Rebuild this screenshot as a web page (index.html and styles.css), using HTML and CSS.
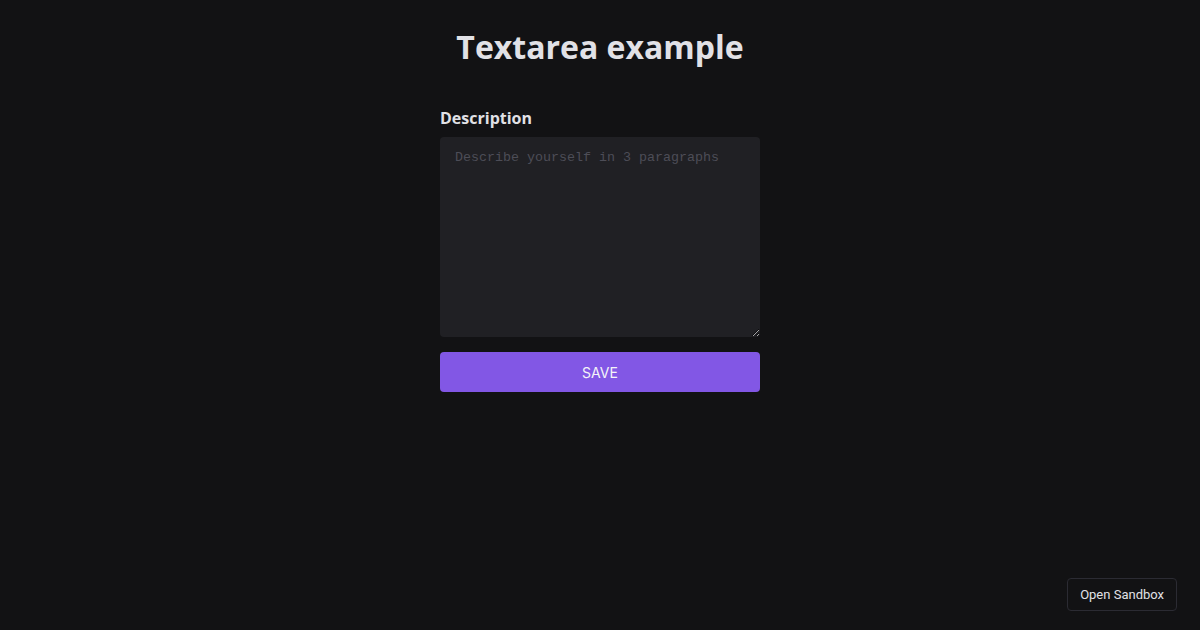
FILE: index.html
```html
<!DOCTYPE html>
<html lang="en">
<head>
<meta charset="UTF-8" />
<title>Textarea example</title>
<meta name="viewport" content="width=device-width,initial-scale=1" />
<link rel="stylesheet" href="styles.css">
</head>
<body>
<div id="app">
  <h1 class="title">Textarea example</h1>
  <form class="form" onsubmit="return false">
    <label class="label" for="description">Description</label>
    <textarea id="description" class="textarea" placeholder="Describe yourself in 3 paragraphs"></textarea>
    <button type="submit" class="save-btn">SAVE</button>
  </form>
</div>
<button class="sandbox-btn">Open Sandbox</button>
</body>
</html>
```

FILE: styles.css
```css
html, body {
  height: 100%;
  margin: 0;
  padding: 0;
  background: #121214;
  color: #e1e1e6;
  font-family: 'Open Sans', Arial, sans-serif;
}
#app {
  display: flex;
  flex-direction: column;
  align-items: center;
}
.title {
  font-size: 32px;
  font-weight: 700;
  margin: 25px 0 0 0;
  line-height: 44px;
  color: #e1e1e6;
}
.form {
  width: 320px;
  display: flex;
  flex-direction: column;
  margin-top: 37px;
}
.label {
  font-size: 16px;
  font-weight: 700;
  line-height: 24px;
  margin-bottom: 7px;
}
.textarea {
  height: 200px;
  box-sizing: border-box;
  background: #202024;
  color: #e1e1e6;
  border: none;
  border-radius: 4px;
  padding: 12px 15px;
  font-family: 'Liberation Mono', 'Courier New', monospace;
  font-size: 13.33px;
  line-height: 17px;
  outline: none;
  resize: vertical;
}
.textarea::placeholder {
  color: #4d4d57;
}
.save-btn {
  margin-top: 15px;
  height: 40px;
  background: #8257e5;
  color: #f4f4f8;
  border: none;
  border-radius: 4px;
  font-family: Inter, Roboto, Arial, sans-serif;
  font-size: 14px;
  cursor: pointer;
}
.sandbox-btn {
  position: fixed;
  right: 23px;
  bottom: 19px;
  height: 33px;
  padding: 0 12px;
  background: #121214;
  color: #e1e1e6;
  border: 1px solid #2b2b33;
  border-radius: 4px;
  font-family: Roboto, Arial, sans-serif;
  font-size: 13px;
  cursor: pointer;
}
```
